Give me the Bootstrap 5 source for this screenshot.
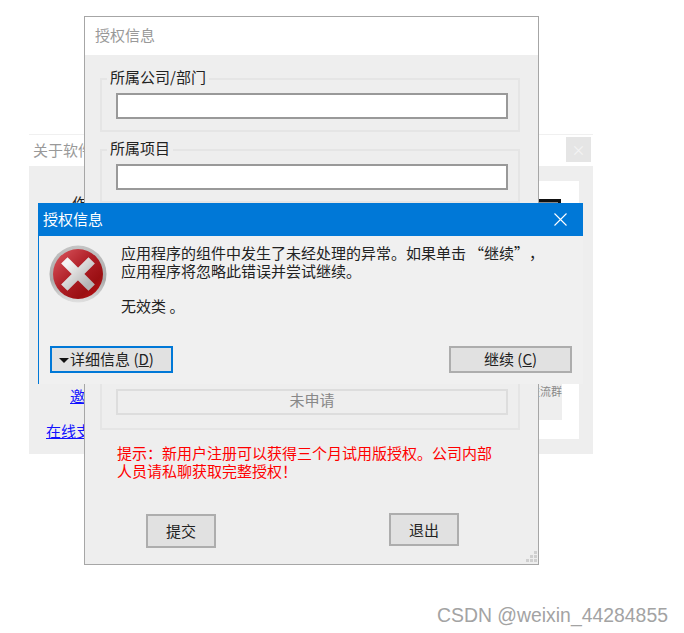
<!DOCTYPE html>
<html lang="zh">
<head>
<meta charset="utf-8">
<title>授权信息</title>
<link href="https://cdn.jsdelivr.net/npm/bootstrap@5.3.0/dist/css/bootstrap.min.css" rel="stylesheet">
<style>
html,body{background:#fff;margin:0;overflow:hidden}
body{font:15px/18px "Noto Sans CJK SC","Liberation Sans",sans-serif;color:#222;text-spacing-trim:space-all}
.pt{font-family:"Noto Sans CJK TC","Noto Sans CJK SC",sans-serif}
.ql{margin-left:3px}
.desk{position:relative;width:684px;height:633px;overflow:hidden}
.win-about{position:absolute;left:29px;top:134px;width:564px;height:320px;border-top:1px solid #f0f0f0;z-index:1}
.about-head{height:31px;color:#999;padding:6px 4px 0}
.about-close{width:25px;height:25px;margin:2px 2px 0 0;background:#e5e5e5;color:#f4f4f4;font-size:14px;line-height:24px;text-align:center}
.about-body{height:288px;background:#eee}
.about-left{width:480px}
.about-author{margin:28px 0 0 43px}
.about-link{display:block;color:#11f;text-decoration:underline;white-space:nowrap}
.link-a{margin:175px 0 0 41px}
.link-b{margin:17px 0 0 17px}
.about-panel{width:70px;height:258px;margin-top:15px;background:#fff}
.qr-frame{height:40px;margin:18px 18px 0 0;border:3px solid #111;background:#888}
.qr-note{height:36px;width:53px;margin-top:145px;background:#eee;color:#888;font-size:11px;line-height:14px;text-align:right}
.win-auth{position:absolute;left:84px;top:16px;width:455px;height:549px;border:1px solid #a6a6a6;background:#eee;z-index:2}
.auth-head{height:38px;background:#fff;color:#999;padding:9px 10px 0}
.auth-body{padding:13px 18px 0 15px}
.group{border:2px solid #e5e5e5;padding:3px 10px 11px 14px;margin:0 0 7px;height:64px;min-width:0}
.group legend{float:none;width:auto;margin:0 0 0 -9px;padding:0 3px 4px;font-size:15px;line-height:18px;height:22px}
.group-last{height:217px;margin-top:10px;padding-bottom:13px}
.field{display:block;height:26px;min-height:0;padding:0;border:2px solid #999;border-radius:0;background:#fff}
.field-off{border-color:#ddd;background:#eee;color:#888;text-align:center;font-size:15px;line-height:18px}
.notice{color:#f00;margin:14px 0 0 17px;width:385px;line-height:18px}
.actions{margin:34px 0 0 46px}
.wbtn{width:70px;height:34px;padding:0;border:2px solid #adadad;border-radius:0;background:#e1e1e1;color:#222;font-size:15px;line-height:28px}
.wbtn-b{height:33px;margin:-1px 0 0 173px}
.grip{position:absolute;right:1px;bottom:1px;display:block}
.win-err{position:absolute;left:38px;top:203px;width:545px;height:181px;background:#f0f0f0;border-left:1px solid #0078d7;z-index:3}
.err-head{height:33px;background:#0078d7;color:#fff;padding:7px 4px 0}
.err-x{display:block;margin:3px 12px 0 0}
.err-main{padding:8px 0 0 10px;height:110px}
.err-text{margin:0 0 0 14px;white-space:nowrap}
.err-text p{margin:0}
.err-gap{margin-top:17px!important}
.err-actions{padding:0 11px}
.dbtn{width:123px;height:27px;padding:0 0 2px;border:2px solid #adadad;border-radius:0;background:#e1e1e1;color:#222;font-size:15px;line-height:21px;text-align:center}
.dbtn-main{border-color:#0078d7;padding-right:10px}
.caret{display:inline-block;border:5px solid transparent;border-top-color:#111;border-bottom:0;vertical-align:2px;margin-right:1px}
.mark-csdn{position:absolute;left:437px;top:604px;font:19.4px/22px "Liberation Sans",sans-serif;color:#a3a3a3;z-index:4;white-space:nowrap}
</style>
</head>
<body>
<div class="desk">

  <section class="win-about">
    <div class="d-flex justify-content-between">
      <div class="about-head">关于软件</div>
      <div class="about-close">×</div>
    </div>
    <div class="about-body d-flex">
      <div class="about-left flex-shrink-0 d-flex flex-column">
        <div class="about-author">作者</div>
        <a class="about-link link-a" href="#">邀请码</a>
        <a class="about-link link-b" href="#">在线支持</a>
      </div>
      <div class="about-panel flex-shrink-0">
        <div class="qr-frame"></div>
        <div class="qr-note">交流群</div>
      </div>
    </div>
  </section>

  <section class="win-auth">
    <div class="auth-head">授权信息</div>
    <div class="auth-body">
      <fieldset class="group"><legend>所属公司/部门</legend><input class="form-control field" type="text" aria-label="所属公司/部门"></fieldset>
      <fieldset class="group"><legend>所属项目</legend><input class="form-control field" type="text" aria-label="所属项目"></fieldset>
      <fieldset class="group group-last d-flex flex-column justify-content-end"><div class="field field-off">未申请</div></fieldset>
      <p class="notice">提示<span class="pt">：</span>新用户注册可以获得三个月试用版授权<span class="pt">。</span>公司内部人员请私聊获取完整授权<span class="pt">！</span></p>
      <div class="actions d-flex align-items-start">
        <button class="btn wbtn" type="button">提交</button>
        <button class="btn wbtn wbtn-b" type="button">退出</button>
      </div>
    </div>
    <svg class="grip" width="12" height="12" viewBox="0 0 12 12" fill="#cfcfcf"><rect x="9" y="0" width="3" height="3"/><rect x="5" y="4" width="3" height="3"/><rect x="9" y="4" width="3" height="3"/><rect x="1" y="8" width="3" height="3"/><rect x="5" y="8" width="3" height="3"/><rect x="9" y="8" width="3" height="3"/></svg>
  </section>

  <section class="win-err">
    <div class="err-head d-flex justify-content-between">
      <div>授权信息</div>
      <svg class="err-x" width="13" height="13" viewBox="0 0 13 13" fill="none" stroke="#fff" stroke-width="1.1"><path d="M.5.5l12 12M12.5.5l-12 12"/></svg>
    </div>
    <div class="err-main d-flex">
      <svg width="58" height="60" viewBox="0 0 58 60" class="flex-shrink-0">
        <defs>
          <linearGradient id="ring" x1="0" y1="0" x2="0" y2="1"><stop offset="0" stop-color="#c4c4c4"/><stop offset=".6" stop-color="#aaa"/><stop offset="1" stop-color="#e0e0e0"/></linearGradient>
          <linearGradient id="redfill" x1="0" y1="0" x2="1" y2="1"><stop offset="0" stop-color="#dd5a62"/><stop offset=".45" stop-color="#b02028"/><stop offset=".75" stop-color="#9a0f12"/><stop offset="1" stop-color="#cc1416"/></linearGradient>
          <linearGradient id="cross" x1="0" y1="0" x2="1" y2="1"><stop offset="0" stop-color="#f4f4f4"/><stop offset="1" stop-color="#b4b4b4"/></linearGradient>
        </defs>
        <circle cx="29" cy="30" r="28.5" fill="url(#ring)"/>
        <circle cx="29" cy="30" r="25" fill="url(#redfill)"/>
        <path d="M18.5 19.5L39.5 40.5M39.5 19.5L18.5 40.5" stroke="url(#cross)" stroke-width="9" stroke-linecap="square" fill="none"/>
      </svg>
      <div class="err-text">
        <p>应用程序的组件中发生了未经处理的异常<span class="pt">。</span>如果单击<span class="ql">“</span>继续”<span class="pt">，</span></p>
        <p>应用程序将忽略此错误并尝试继续<span class="pt">。</span></p>
        <p class="err-gap">无效类 <span class="pt">。</span></p>
      </div>
    </div>
    <div class="err-actions d-flex justify-content-between">
      <button class="btn dbtn dbtn-main" type="button"><span class="caret"></span>详细信息 (<u>D</u>)</button>
      <button class="btn dbtn" type="button">继续 (<u>C</u>)</button>
    </div>
  </section>

  <div class="mark-csdn">CSDN @weixin_44284855</div>
</div>
<script src="https://cdn.jsdelivr.net/npm/bootstrap@5.3.0/dist/js/bootstrap.bundle.min.js"></script>
</body>
</html>
